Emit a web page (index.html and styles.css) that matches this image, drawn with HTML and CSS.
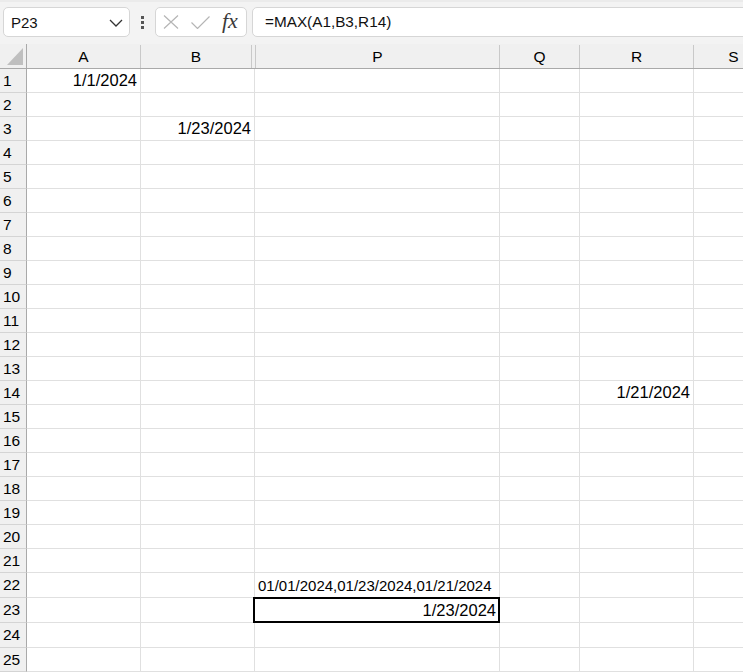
FILE: index.html
```html
<!DOCTYPE html>
<html lang="en">
<head>
    <meta charset="UTF-8">
    <meta name="viewport" content="width=device-width, initial-scale=1.0">
    <title>Sheet</title>
    <link rel="stylesheet" href="styles.css">
</head>
<body>
    <div class="toolbar">
        <div class="namebox">
            <span class="name">P23</span>
            <svg class="chev" width="14" height="8" viewBox="0 0 14 8"><polyline points="1,1 7,7 13,1" fill="none" stroke="#333" stroke-width="1.3"/></svg>
        </div>
        <div class="dots"><i></i><i></i><i></i></div>
        <div class="fxbox">
            <svg width="16" height="14" viewBox="0 0 16 14"><path d="M1 0.5 L15 13.5 M15 0.5 L1 13.5" stroke="#b5b5b5" stroke-width="1.2" fill="none"/></svg>
            <svg class="chk" width="19" height="13" viewBox="0 0 19 13"><polyline points="0.5,6.5 6.5,12.5 18.5,0.5" stroke="#b5b5b5" stroke-width="1.2" fill="none"/></svg>
            <span class="fx">fx</span>
        </div>
        <div class="formula">=MAX(A1,B3,R14)</div>
    </div>

    <div class="sheet">
        <div class="hrow">
            <div class="hc corner"><svg width="27" height="24" viewBox="0 0 27 24"><polygon points="7,21 23,4 23,21" fill="#bfbfbf"/></svg></div>
            <div class="hc w-a">A</div>
            <div class="hc w-bh">B</div>
            <div class="hc hidden-mark"></div>
            <div class="hc w-ph">P</div>
            <div class="hc w-q">Q</div>
            <div class="hc w-r">R</div>
            <div class="hc w-s">S</div>
        </div>

        <div class="row"><div class="rh">1</div><div class="cell w-a num">1/1/2024</div><div class="cell w-b"></div><div class="cell w-p"></div><div class="cell w-q"></div><div class="cell w-r"></div><div class="cell w-s"></div></div>
        <div class="row"><div class="rh">2</div><div class="cell w-a"></div><div class="cell w-b"></div><div class="cell w-p"></div><div class="cell w-q"></div><div class="cell w-r"></div><div class="cell w-s"></div></div>
        <div class="row"><div class="rh">3</div><div class="cell w-a"></div><div class="cell w-b num">1/23/2024</div><div class="cell w-p"></div><div class="cell w-q"></div><div class="cell w-r"></div><div class="cell w-s"></div></div>
        <div class="row"><div class="rh">4</div><div class="cell w-a"></div><div class="cell w-b"></div><div class="cell w-p"></div><div class="cell w-q"></div><div class="cell w-r"></div><div class="cell w-s"></div></div>
        <div class="row"><div class="rh">5</div><div class="cell w-a"></div><div class="cell w-b"></div><div class="cell w-p"></div><div class="cell w-q"></div><div class="cell w-r"></div><div class="cell w-s"></div></div>
        <div class="row"><div class="rh">6</div><div class="cell w-a"></div><div class="cell w-b"></div><div class="cell w-p"></div><div class="cell w-q"></div><div class="cell w-r"></div><div class="cell w-s"></div></div>
        <div class="row"><div class="rh">7</div><div class="cell w-a"></div><div class="cell w-b"></div><div class="cell w-p"></div><div class="cell w-q"></div><div class="cell w-r"></div><div class="cell w-s"></div></div>
        <div class="row"><div class="rh">8</div><div class="cell w-a"></div><div class="cell w-b"></div><div class="cell w-p"></div><div class="cell w-q"></div><div class="cell w-r"></div><div class="cell w-s"></div></div>
        <div class="row"><div class="rh">9</div><div class="cell w-a"></div><div class="cell w-b"></div><div class="cell w-p"></div><div class="cell w-q"></div><div class="cell w-r"></div><div class="cell w-s"></div></div>
        <div class="row"><div class="rh">10</div><div class="cell w-a"></div><div class="cell w-b"></div><div class="cell w-p"></div><div class="cell w-q"></div><div class="cell w-r"></div><div class="cell w-s"></div></div>
        <div class="row"><div class="rh">11</div><div class="cell w-a"></div><div class="cell w-b"></div><div class="cell w-p"></div><div class="cell w-q"></div><div class="cell w-r"></div><div class="cell w-s"></div></div>
        <div class="row"><div class="rh">12</div><div class="cell w-a"></div><div class="cell w-b"></div><div class="cell w-p"></div><div class="cell w-q"></div><div class="cell w-r"></div><div class="cell w-s"></div></div>
        <div class="row"><div class="rh">13</div><div class="cell w-a"></div><div class="cell w-b"></div><div class="cell w-p"></div><div class="cell w-q"></div><div class="cell w-r"></div><div class="cell w-s"></div></div>
        <div class="row"><div class="rh">14</div><div class="cell w-a"></div><div class="cell w-b"></div><div class="cell w-p"></div><div class="cell w-q"></div><div class="cell w-r num">1/21/2024</div><div class="cell w-s"></div></div>
        <div class="row"><div class="rh">15</div><div class="cell w-a"></div><div class="cell w-b"></div><div class="cell w-p"></div><div class="cell w-q"></div><div class="cell w-r"></div><div class="cell w-s"></div></div>
        <div class="row"><div class="rh">16</div><div class="cell w-a"></div><div class="cell w-b"></div><div class="cell w-p"></div><div class="cell w-q"></div><div class="cell w-r"></div><div class="cell w-s"></div></div>
        <div class="row"><div class="rh">17</div><div class="cell w-a"></div><div class="cell w-b"></div><div class="cell w-p"></div><div class="cell w-q"></div><div class="cell w-r"></div><div class="cell w-s"></div></div>
        <div class="row"><div class="rh">18</div><div class="cell w-a"></div><div class="cell w-b"></div><div class="cell w-p"></div><div class="cell w-q"></div><div class="cell w-r"></div><div class="cell w-s"></div></div>
        <div class="row"><div class="rh">19</div><div class="cell w-a"></div><div class="cell w-b"></div><div class="cell w-p"></div><div class="cell w-q"></div><div class="cell w-r"></div><div class="cell w-s"></div></div>
        <div class="row"><div class="rh">20</div><div class="cell w-a"></div><div class="cell w-b"></div><div class="cell w-p"></div><div class="cell w-q"></div><div class="cell w-r"></div><div class="cell w-s"></div></div>
        <div class="row"><div class="rh">21</div><div class="cell w-a"></div><div class="cell w-b"></div><div class="cell w-p"></div><div class="cell w-q"></div><div class="cell w-r"></div><div class="cell w-s"></div></div>
        <div class="row tall"><div class="rh">22</div><div class="cell w-a"></div><div class="cell w-b"></div><div class="cell w-p txt">01/01/2024,01/23/2024,01/21/2024</div><div class="cell w-q"></div><div class="cell w-r"></div><div class="cell w-s"></div></div>
        <div class="row tall"><div class="rh">23</div><div class="cell w-a"></div><div class="cell w-b"></div><div class="cell w-p num sel">1/23/2024</div><div class="cell w-q"></div><div class="cell w-r"></div><div class="cell w-s"></div></div>
        <div class="row tall"><div class="rh">24</div><div class="cell w-a"></div><div class="cell w-b"></div><div class="cell w-p"></div><div class="cell w-q"></div><div class="cell w-r"></div><div class="cell w-s"></div></div>
        <div class="row"><div class="rh">25</div><div class="cell w-a"></div><div class="cell w-b"></div><div class="cell w-p"></div><div class="cell w-q"></div><div class="cell w-r"></div><div class="cell w-s"></div></div>
        <div class="row"><div class="rh"></div><div class="cell w-a"></div><div class="cell w-b"></div><div class="cell w-p"></div><div class="cell w-q"></div><div class="cell w-r"></div><div class="cell w-s"></div></div>
    </div>
</body>
</html>
```

FILE: styles.css
```css
html, body {
    margin: 0;
    height: 672px;
    overflow: hidden;
}
body {
    font-family: "Liberation Sans", Arial, sans-serif;
    color: #000;
    background-color: #fff;
}

/* formula bar */
.toolbar {
    display: flex;
    align-items: flex-start;
    height: 44px;
    box-sizing: border-box;
    padding: 5px 0 0 3px;
    background-color: #f3f3f3;
    border-top: 2px solid #ebebeb;
}
.namebox, .fxbox, .formula {
    height: 30px;
    box-sizing: border-box;
    background-color: #fff;
    border: 1px solid #d6d6d6;
    border-radius: 5px;
    display: flex;
    align-items: center;
}
.namebox {
    width: 127px;
    padding: 0 6px 0 7px;
    justify-content: space-between;
}
.name {
    font-size: 15px;
    color: #111;
}
.chev {
    margin-top: 2px;
}
.dots {
    display: flex;
    flex-direction: column;
    gap: 2px;
    margin: 9px 0 0 11px;
    width: 3px;
}
.dots i {
    display: block;
    width: 3px;
    height: 3px;
    background-color: #555;
}
.fxbox {
    width: 92px;
    margin-left: 11px;
    padding-left: 7px;
    gap: 12px;
}
.fx {
    font-family: "Liberation Serif", "Times New Roman", serif;
    font-style: italic;
    font-size: 22px;
    color: #3a3a3a;
    line-height: 1;
    margin-top: -2px;
}
.formula {
    flex: 1;
    margin-left: 5px;
    margin-right: -10px;
    padding-left: 12px;
    font-size: 15.3px;
    color: #111;
}

/* grid */
.sheet {
    width: 100%;
    overflow: hidden;
}
.hrow, .row {
    display: flex;
    width: 800px;
}
.hrow {
    height: 25px;
    background-color: #f0f0f0;
    border-bottom: 1px solid #a9a9a9;
    box-sizing: border-box;
}
.hc {
    flex: none;
    box-sizing: border-box;
    border-right: 1px solid #c9c9c9;
    font-size: 15.5px;
    text-align: center;
    margin-top: 1px;
    line-height: 23px;
}
.corner {
    width: 27px;
    border-right-color: #a9a9a9;
    margin-top: 0;
    line-height: 0;
}
.hidden-mark {
    width: 4px;
}
.row {
    height: 24px;
}
.row.tall {
    height: 25px;
}
.rh {
    flex: none;
    width: 27px;
    box-sizing: border-box;
    background-color: #f0f0f0;
    border-right: 1px solid #a9a9a9;
    border-bottom: 1px solid #d4d4d4;
    font-size: 15.5px;
    padding-left: 3px;
    display: flex;
    align-items: center;
}
.cell {
    flex: none;
    box-sizing: border-box;
    border-right: 1px solid #e0e0e0;
    border-bottom: 1px solid #e0e0e0;
    padding: 0 3px;
    display: flex;
    align-items: center;
    white-space: nowrap;
}
.num {
    justify-content: flex-end;
    font-size: 16.5px;
}
.txt {
    font-size: 15px;
}
.sel {
    position: relative;
}
.sel::after {
    content: "";
    position: absolute;
    top: -1px;
    left: -2px;
    right: -1px;
    bottom: -1px;
    border: 2px solid #000;
}

.w-a { width: 114px; }
.w-b { width: 114px; }
.w-bh { width: 111px; }
.w-p { width: 245px; }
.w-ph { width: 244px; }
.w-q { width: 80px; }
.w-r { width: 114px; }
.w-s { width: 80px; }
```
